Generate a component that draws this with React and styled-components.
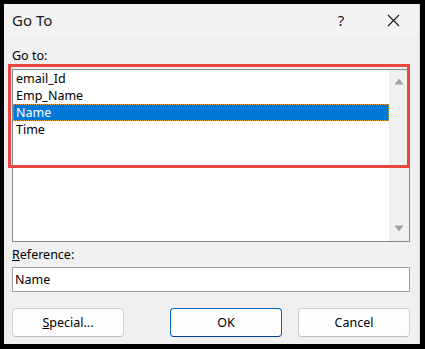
import React from "react";
import styled, { createGlobalStyle } from "styled-components";

const Global = createGlobalStyle`
  html, body {
    margin: 0;
    padding: 0;
    background: #000;
  }
  body {
    font-family: "Noto Sans", "Open Sans", sans-serif;
    color: #000;
  }
`;

const Page = styled.div`
  width: 425px;
  height: 349px;
  padding: 4px 5px 5px 4px;
  box-sizing: border-box;
`;

const Window = styled.div`
  width: 416px;
  height: 340px;
  background: #f0f0f0;
  border-right: 1px solid #d4d4d4;
  box-sizing: border-box;
  display: flex;
  flex-direction: column;
`;

const TitleBar = styled.div`
  height: 32px;
  display: flex;
  align-items: center;
  padding-left: 8px;
  background: #f3f3f3;
`;

const Title = styled.div`
  flex: 1;
  font-size: 15px;
  line-height: 20px;
  color: #1a1a1a;
`;

const TitleButton = styled.div`
  width: 52px;
  height: 32px;
  display: flex;
  align-items: center;
  justify-content: center;
  font-size: 15px;
  color: #1a1a1a;
`;

const Body = styled.div`
  padding: 0 9px 0 8px;
  display: flex;
  flex-direction: column;
`;

const Label = styled.div`
  font-size: 12.5px;
  line-height: 16px;
  margin-top: ${(p) => p.$top}px;
  u {
    text-decoration-thickness: 1px;
  }
`;

const ListWrap = styled.div`
  position: relative;
  margin-top: 5px;
`;

const ListBox = styled.div`
  height: 173px;
  border: 1px solid #828790;
  background: #fff;
  box-sizing: border-box;
  display: flex;
`;

const Items = styled.div`
  flex: 1;
  display: flex;
  flex-direction: column;
`;

const Item = styled.div`
  height: 17px;
  line-height: 17px;
  font-size: 12.5px;
  padding-left: 3px;
  box-sizing: border-box;
  background: ${(p) => (p.$selected ? "#0078d7" : "transparent")};
  color: ${(p) => (p.$selected ? "#fff" : "#000")};
  outline: ${(p) => (p.$selected ? "1px dotted #f0a030" : "none")};
  outline-offset: -1px;
`;

const ScrollBar = styled.div`
  width: 20px;
  background: #f0f0f0;
  display: flex;
  flex-direction: column;
  justify-content: space-between;
  align-items: center;
  padding: 8px 0 9px;
  box-sizing: border-box;
`;

const Highlight = styled.div`
  position: absolute;
  left: -4px;
  top: -5px;
  width: 402px;
  height: 104px;
  border: 3px solid #e8483f;
  box-sizing: border-box;
  pointer-events: none;
`;

const Input = styled.div`
  margin-top: 4px;
  height: 25px;
  border: 1px solid #a0a0a0;
  background: #fff;
  box-sizing: border-box;
  font-size: 12.5px;
  line-height: 23px;
  padding-left: 2px;
`;

const ButtonRow = styled.div`
  margin-top: 16px;
  display: flex;
  align-items: center;
`;

const Spacer = styled.div`
  flex: 1;
`;

const Button = styled.div`
  width: 112px;
  height: 29px;
  box-sizing: border-box;
  border: 1px solid ${(p) => (p.$primary ? "#0067c0" : "#d0d0d0")};
  border-bottom-color: ${(p) => (p.$primary ? "#003e92" : "#bdbdbd")};
  border-radius: 4px;
  background: #fdfdfd;
  display: flex;
  align-items: center;
  justify-content: center;
  font-size: 12.5px;
  margin-left: ${(p) => p.$gap || 0}px;
`;

const Arrow = ({ up }) => (
  <svg width="10" height="7" viewBox="0 0 10 7">
    <path
      d={up ? "M5 0.5 L9.5 6.5 L0.5 6.5 Z" : "M0.5 0.5 L9.5 0.5 L5 6.5 Z"}
      fill="#a3a3a3"
    />
  </svg>
);

const CloseIcon = () => (
  <svg width="13" height="13" viewBox="0 0 13 13">
    <path d="M1 1 L12 12 M12 1 L1 12" stroke="#1a1a1a" strokeWidth="1.1" />
  </svg>
);

const items = ["email_Id", "Emp_Name", "Name", "Time"];

export default function App() {
  return (
    <Page>
      <Global />
      <Window>
        <TitleBar>
          <Title>Go To</Title>
          <TitleButton>?</TitleButton>
          <TitleButton>
            <CloseIcon />
          </TitleButton>
        </TitleBar>
        <Body>
          <Label $top={12}>Go to:</Label>
          <ListWrap>
            <ListBox>
              <Items>
                {items.map((it) => (
                  <Item key={it} $selected={it === "Name"}>
                    {it}
                  </Item>
                ))}
              </Items>
              <ScrollBar>
                <Arrow up />
                <Arrow />
              </ScrollBar>
            </ListBox>
            <Highlight />
          </ListWrap>
          <Label $top={5}>
            <u>R</u>eference:
          </Label>
          <Input>Name</Input>
          <ButtonRow>
            <Button>
              <span>
                <u>S</u>pecial...
              </span>
            </Button>
            <Spacer />
            <Button $primary>OK</Button>
            <Button $gap={16}>Cancel</Button>
          </ButtonRow>
        </Body>
      </Window>
    </Page>
  );
}
